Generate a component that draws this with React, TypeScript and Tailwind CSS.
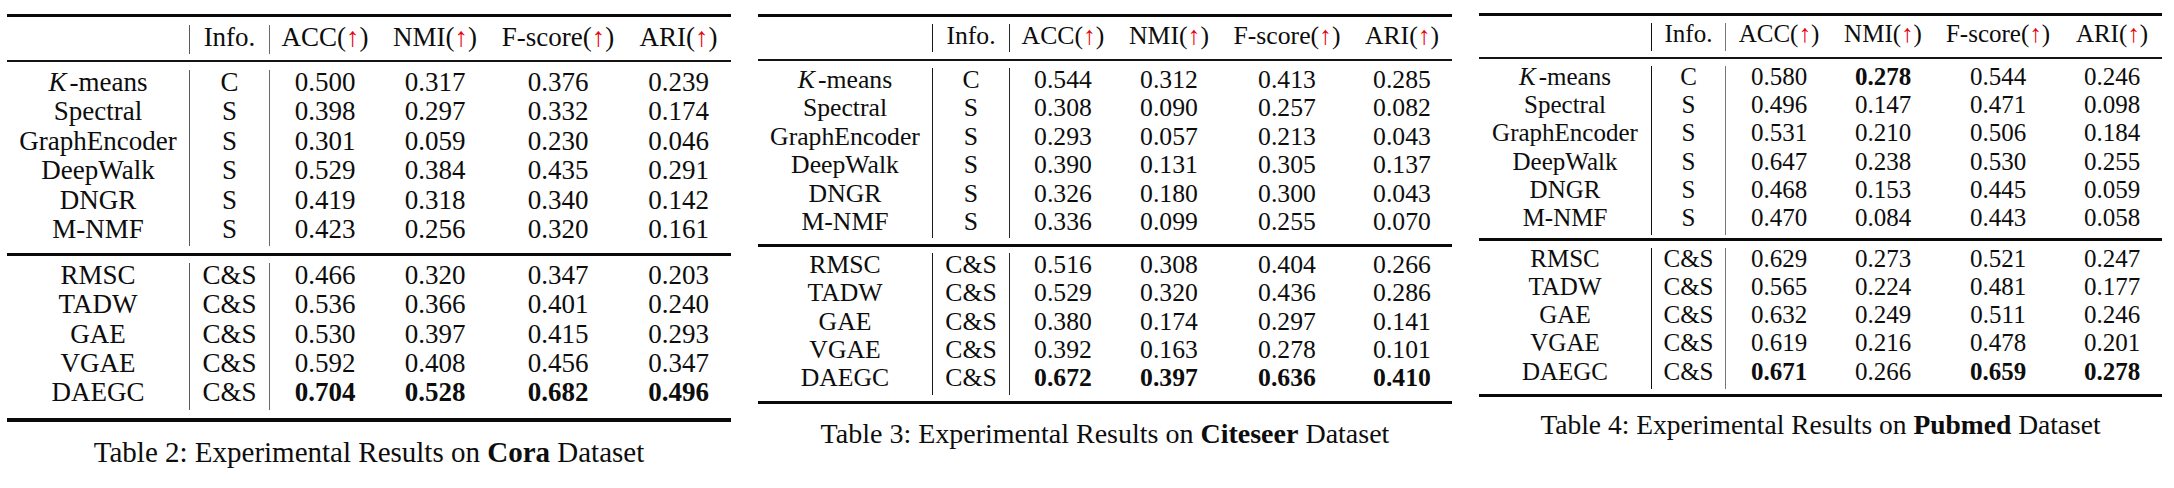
import React from "react";

type Cfg = {
  wrap: string;
  cols: string;
  text: string;
  row: string;
  topRule: string;
  midRule1: string;
  midRule2: string;
  botRule: string;
  hPt: string;
  hPb: string;
  b1Pt: string;
  b1Pb: string;
  b2Pt: string;
  b2Pb: string;
  bar1: string;
  bar2: string;
  caption: string;
  name: string;
  num: string;
  rows1: string[][];
  rows2: string[][];
};

const T1: Cfg = {
  wrap: "w-[724px] mt-[14px]",
  cols: "grid grid-cols-[183px_80px_110px_110px_136px_105px]",
  text: "text-[27px]",
  row: "h-[29.4px] leading-[25.8px]",
  topRule: "h-[3px]",
  midRule1: "h-[2px]",
  midRule2: "h-[3px]",
  botRule: "h-[4px]",
  hPt: "h-[8px]",
  hPb: "h-[5.6px]",
  b1Pt: "h-[8px]",
  b1Pb: "h-[6.6px]",
  b2Pt: "h-[7px]",
  b2Pb: "h-[8px]",
  bar1: "border-r border-[#5a5a5a]",
  bar2: "border-r border-[#6a6a6a]",
  caption: "mt-[14px] text-[29px] leading-[32px]",
  name: "Cora",
  num: "2",
  rows1: [
    ["K", "C", "0.500", "0.317", "0.376", "0.239"],
    ["Spectral", "S", "0.398", "0.297", "0.332", "0.174"],
    ["GraphEncoder", "S", "0.301", "0.059", "0.230", "0.046"],
    ["DeepWalk", "S", "0.529", "0.384", "0.435", "0.291"],
    ["DNGR", "S", "0.419", "0.318", "0.340", "0.142"],
    ["M-NMF", "S", "0.423", "0.256", "0.320", "0.161"],
  ],
  rows2: [
    ["RMSC", "C&S", "0.466", "0.320", "0.347", "0.203"],
    ["TADW", "C&S", "0.536", "0.366", "0.401", "0.240"],
    ["GAE", "C&S", "0.530", "0.397", "0.415", "0.293"],
    ["VGAE", "C&S", "0.592", "0.408", "0.456", "0.347"],
    ["DAEGC", "C&S", "*0.704", "*0.528", "*0.682", "*0.496"],
  ],
};

const T2: Cfg = {
  wrap: "w-[694px] mt-[14px]",
  cols: "grid grid-cols-[175px_77px_106px_106px_130px_100px]",
  text: "text-[25.7px]",
  row: "h-[28.4px] leading-[24.7px]",
  topRule: "h-[3px]",
  midRule1: "h-[2px]",
  midRule2: "h-[3px]",
  botRule: "h-[3px]",
  hPt: "h-[7px]",
  hPb: "h-[6.6px]",
  b1Pt: "h-[7px]",
  b1Pb: "h-[5.6px]",
  b2Pt: "h-[6px]",
  b2Pb: "h-[6px]",
  bar1: "border-r border-[#1a1a1a]",
  bar2: "border-r border-[#2a2a2a]",
  caption: "mt-[14px] text-[28px] leading-[31px]",
  name: "Citeseer",
  num: "3",
  rows1: [
    ["K", "C", "0.544", "0.312", "0.413", "0.285"],
    ["Spectral", "S", "0.308", "0.090", "0.257", "0.082"],
    ["GraphEncoder", "S", "0.293", "0.057", "0.213", "0.043"],
    ["DeepWalk", "S", "0.390", "0.131", "0.305", "0.137"],
    ["DNGR", "S", "0.326", "0.180", "0.300", "0.043"],
    ["M-NMF", "S", "0.336", "0.099", "0.255", "0.070"],
  ],
  rows2: [
    ["RMSC", "C&S", "0.516", "0.308", "0.404", "0.266"],
    ["TADW", "C&S", "0.529", "0.320", "0.436", "0.286"],
    ["GAE", "C&S", "0.380", "0.174", "0.297", "0.141"],
    ["VGAE", "C&S", "0.392", "0.163", "0.278", "0.101"],
    ["DAEGC", "C&S", "*0.672", "*0.397", "*0.636", "*0.410"],
  ],
};

const T3: Cfg = {
  wrap: "w-[683px] mt-[13px]",
  cols: "grid grid-cols-[173px_74px_106px_102px_128px_100px]",
  text: "text-[25px]",
  row: "h-[28.2px] leading-[22.6px]",
  topRule: "h-[3px]",
  midRule1: "h-[2px]",
  midRule2: "h-[3px]",
  botRule: "h-[3px]",
  hPt: "h-[7px]",
  hPb: "h-[5.8px]",
  b1Pt: "h-[7px]",
  b1Pb: "h-[2.8px]",
  b2Pt: "h-[7px]",
  b2Pb: "h-[5px]",
  bar1: "border-r border-[#111111]",
  bar2: "border-r border-[#777777]",
  caption: "mt-[13.5px] text-[27.5px] leading-[30.4px]",
  name: "Pubmed",
  num: "4",
  rows1: [
    ["K", "C", "0.580", "*0.278", "0.544", "0.246"],
    ["Spectral", "S", "0.496", "0.147", "0.471", "0.098"],
    ["GraphEncoder", "S", "0.531", "0.210", "0.506", "0.184"],
    ["DeepWalk", "S", "0.647", "0.238", "0.530", "0.255"],
    ["DNGR", "S", "0.468", "0.153", "0.445", "0.059"],
    ["M-NMF", "S", "0.470", "0.084", "0.443", "0.058"],
  ],
  rows2: [
    ["RMSC", "C&S", "0.629", "0.273", "0.521", "0.247"],
    ["TADW", "C&S", "0.565", "0.224", "0.481", "0.177"],
    ["GAE", "C&S", "0.632", "0.249", "0.511", "0.246"],
    ["VGAE", "C&S", "0.619", "0.216", "0.478", "0.201"],
    ["DAEGC", "C&S", "*0.671", "0.266", "*0.659", "*0.278"],
  ],
};

function Up() {
  return <span className="text-[#e8000b]">↑</span>;
}

function Num({ v }: { v: string }) {
  if (v.startsWith("*")) return <span className="font-bold">{v.slice(1)}</span>;
  return <span>{v}</span>;
}

function Method({ v }: { v: string }) {
  if (v === "K")
    return (
      <span>
        <span className="italic">K</span>
        <span className="ml-[3px]">-means</span>
      </span>
    );
  return <span>{v}</span>;
}

function Row({ cfg, r }: { cfg: Cfg; r: string[] }) {
  return (
    <div className={`${cfg.cols} ${cfg.row}`}>
      <div className={`text-center ${cfg.bar1}`}>
        <Method v={r[0]} />
      </div>
      <div className={`text-center ${cfg.bar2}`}>{r[1]}</div>
      <div className="text-center">
        <Num v={r[2]} />
      </div>
      <div className="text-center">
        <Num v={r[3]} />
      </div>
      <div className="text-center">
        <Num v={r[4]} />
      </div>
      <div className="text-center">
        <Num v={r[5]} />
      </div>
    </div>
  );
}

function Table({ cfg }: { cfg: Cfg }) {
  return (
    <div className={`${cfg.wrap} flex flex-col shrink-0`}>
      <div className={`${cfg.topRule} bg-[#0a0a0a]`} />
      <div className={cfg.hPt} />
      <div className={`${cfg.cols} ${cfg.row} ${cfg.text}`}>
        <div className={cfg.bar1} />
        <div className={`text-center ${cfg.bar2}`}>Info.</div>
        <div className="text-center whitespace-nowrap">
          ACC(<Up />)
        </div>
        <div className="text-center whitespace-nowrap">
          NMI(<Up />)
        </div>
        <div className="text-center whitespace-nowrap">
          F-score(<Up />)
        </div>
        <div className="text-center whitespace-nowrap">
          ARI(<Up />)
        </div>
      </div>
      <div className={cfg.hPb} />
      <div className={`${cfg.midRule1} bg-[#141414]`} />
      <div className={cfg.b1Pt} />
      <div className={cfg.text}>
        {cfg.rows1.map((r, i) => (
          <Row key={i} cfg={cfg} r={r} />
        ))}
      </div>
      <div className={cfg.b1Pb} />
      <div className={`${cfg.midRule2} bg-[#0a0a0a]`} />
      <div className={cfg.b2Pt} />
      <div className={cfg.text}>
        {cfg.rows2.map((r, i) => (
          <Row key={i} cfg={cfg} r={r} />
        ))}
      </div>
      <div className={cfg.b2Pb} />
      <div className={`${cfg.botRule} bg-[#0a0a0a]`} />
      <div className={`${cfg.caption} text-center whitespace-nowrap`}>
        Table {cfg.num}: Experimental Results on <span className="font-bold">{cfg.name}</span> Dataset
      </div>
    </div>
  );
}

export default function App() {
  return (
    <div className="w-[2174px] h-[488px] bg-white text-[#0d0d0d] [font-family:Liberation_Serif,serif] flex items-start pl-[7px] gap-[27px] overflow-hidden">
      <Table cfg={T1} />
      <Table cfg={T2} />
      <Table cfg={T3} />
    </div>
  );
}
